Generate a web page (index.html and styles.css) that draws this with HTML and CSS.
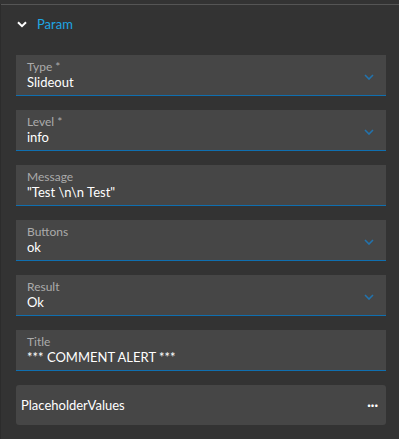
FILE: index.html
```html
<!DOCTYPE html>
<html>
<head>
<meta charset="utf-8">
<link rel="stylesheet" href="styles.css">
</head>
<body>
<div class="panel">
  <div class="topline"></div>
  <div class="header">
    <svg class="hchev" width="10" height="7" viewBox="0 0 10 7"><path d="M1 1.2 L5 5.2 L9 1.2" fill="none" stroke="#ffffff" stroke-width="2"/></svg>
    <span class="htitle">Param</span>
  </div>
  <div class="fields">
    <div class="field">
      <div class="texts"><div class="label">Type *</div><div class="value">Slideout</div></div>
      <svg class="chev" width="10" height="6" viewBox="0 0 10 6"><path d="M1 1 L5 5 L9 1" fill="none" stroke="#2273ad" stroke-width="1.6"/></svg>
    </div>
    <div class="field">
      <div class="texts"><div class="label">Level *</div><div class="value">info</div></div>
      <svg class="chev" width="10" height="6" viewBox="0 0 10 6"><path d="M1 1 L5 5 L9 1" fill="none" stroke="#2273ad" stroke-width="1.6"/></svg>
    </div>
    <div class="field">
      <div class="texts"><div class="label">Message</div><div class="value">"Test \n\n Test"</div></div>
    </div>
    <div class="field">
      <div class="texts"><div class="label">Buttons</div><div class="value">ok</div></div>
      <svg class="chev" width="10" height="6" viewBox="0 0 10 6"><path d="M1 1 L5 5 L9 1" fill="none" stroke="#2273ad" stroke-width="1.6"/></svg>
    </div>
    <div class="field">
      <div class="texts"><div class="label">Result</div><div class="value">Ok</div></div>
      <svg class="chev" width="10" height="6" viewBox="0 0 10 6"><path d="M1 1 L5 5 L9 1" fill="none" stroke="#2273ad" stroke-width="1.6"/></svg>
    </div>
    <div class="field">
      <div class="texts"><div class="label">Title</div><div class="value">*** COMMENT ALERT ***</div></div>
    </div>
    <div class="card">
      <span class="cardtitle">PlaceholderValues</span>
      <span class="dots">···</span>
    </div>
  </div>
</div>
</body>
</html>
```
FILE: styles.css
```css
html, body {
  margin: 0;
  padding: 0;
  background: #333333;
}
body {
  width: 399px;
  height: 439px;
  overflow: hidden;
  font-family: Lato, "Liberation Sans", sans-serif;
}
.panel {
  border-left: 1px solid #2c2c2c;
  height: 439px;
  box-sizing: border-box;
}
.topline {
  margin-top: 4px;
  height: 1px;
  background: #555555;
}
.header {
  display: flex;
  align-items: center;
  height: 38px;
  padding-left: 16px;
  box-sizing: border-box;
}
.hchev {
  display: block;
  margin-top: 1px;
}
.htitle {
  margin-left: 10px;
  color: #1ea6e4;
  font-size: 13px;
}
.fields {
  display: flex;
  flex-direction: column;
  gap: 14px;
  margin: 12px 13px 0 15px;
}
.field {
  height: 41px;
  box-sizing: border-box;
  background: #464646;
  border-bottom: 1px solid #0f6fb0;
  display: flex;
  align-items: center;
  justify-content: space-between;
  padding: 0 11px 0 11px;
}
.texts {
  display: flex;
  flex-direction: column;
  margin-top: -1px;
}
.label {
  color: #ababab;
  font-size: 12px;
  line-height: 15px;
}
.value {
  color: #ffffff;
  font-size: 13px;
  line-height: 16px;
}
.chev {
  display: block;
  margin-top: 4px;
  margin-right: 1px;
}
.card {
  height: 40px;
  background: #464646;
  border-radius: 3px;
  display: flex;
  align-items: center;
  justify-content: space-between;
  padding: 0 8px 0 5px;
}
.cardtitle {
  color: #ffffff;
  font-size: 13px;
}
.dots {
  color: #ffffff;
  font-weight: bold;
  font-size: 13px;
}
```
